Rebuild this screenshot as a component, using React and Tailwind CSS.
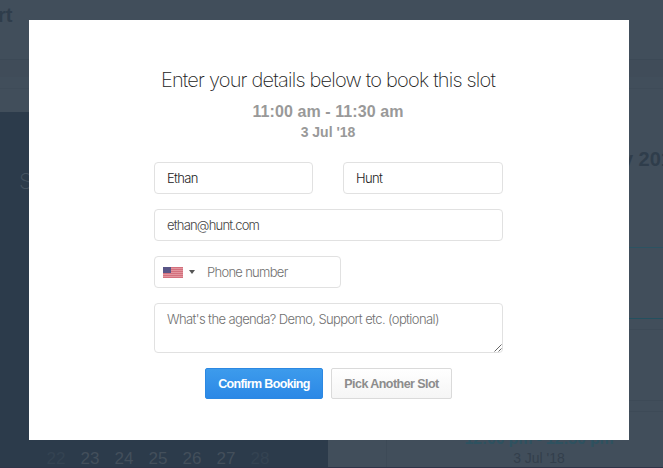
const days = [22, 23, 24, 25, 26, 27, 28];

function Backdrop() {
  return (
    <div className="flex h-full flex-col bg-[#414e5b] font-['Liberation_Sans',sans-serif]">
      <header className="h-[59px] shrink-0 pt-[3px] text-[20px] leading-[24px] font-bold text-[#2f3d4b]">
        <span className="-ml-[2px]">rt</span>
      </header>
      <div className="h-[18px] shrink-0 border-t border-[#3c4956] bg-[#404c59]" />
      <div className="h-[12px] shrink-0 border-b border-[#3e4b58]" />
      <div className="flex min-h-0 flex-1">
        <aside className="mt-[23px] flex w-[328px] shrink-0 flex-col justify-between bg-[#2c3b4b]">
          <div className="pt-[55px] pl-[19px] font-['Inter',sans-serif] text-[22px] leading-[28px] font-extralight text-[#455361]">
            Select
          </div>
          <div className="ml-[39px] grid h-[18px] w-[238px] grid-cols-7 text-center text-[17px] leading-[20px] text-[#434f5b]">
            {days.map((day) => (
              <span key={day} className={day === 22 || day === 28 ? "text-[#344352]" : ""}>
                {day}
              </span>
            ))}
          </div>
        </aside>
        <main className="flex min-w-0 flex-1 flex-col overflow-hidden">
          <div className="flex h-[159px] shrink-0 justify-end border-b border-[#2b5362] pt-[58px]">
            <div className="-mr-[9px] text-[20px] leading-[24px] font-bold whitespace-nowrap text-[#2f3d4b]">
              July 201
            </div>
          </div>
          <div className="h-[71px] shrink-0 border-b border-[#23505f]" />
          <div className="ml-[58px] h-[11px] shrink-0 border-b border-[#3d4a57]" />
          <div className="ml-[58px] h-[71px] shrink-0 border-b border-[#3d4a57]" />
          <div className="mt-[10px] ml-[58px] h-[56px] shrink-0 border-t border-l border-[#3d4a57] pt-[18px] text-center">
            <div className="ml-[28px] text-[16px] leading-[18px] font-bold tracking-[-0.2px] text-[#2e5260]">
              12:00 pm - 12:30 pm
            </div>
            <div className="ml-[28px] text-[14px] leading-[21px] text-[#333f4c]">3 Jul '18</div>
          </div>
        </main>
      </div>
      <div className="h-px shrink-0 bg-[#2f3448]" />
    </div>
  );
}

function Flag() {
  return (
    <svg width="20" height="11" viewBox="0 0 20 11" className="shrink-0">
      <rect width="20" height="11" fill="#e3959e" />
      {[0, 2, 4, 6, 8, 10].map((y) => (
        <rect key={y} y={y} width="20" height="1" fill="#d3707d" />
      ))}
      <rect width="8" height="6" fill="#595586" />
    </svg>
  );
}

const field =
  "rounded-[4px] border border-[#e1e1e1] bg-white px-[12px] text-[13px] font-light outline-none";

export default function App() {
  return (
    <div className="relative h-[468px] w-[663px] overflow-hidden">
      <Backdrop />
      <div className="absolute top-[20px] left-[29px] flex h-[420px] w-[600px] flex-col bg-white pt-[46px] font-['Inter',sans-serif]">
        <div className="pr-[2px] text-center text-[#999]">
          <h1 className="text-[20px] leading-[28px] font-extralight tracking-[-0.79px] text-[#222]">
            Enter your details below to book this slot
          </h1>
          <div className="mt-[8px] font-['Liberation_Sans',sans-serif] text-[16px] leading-[20px] font-bold tracking-[0.08px]">
            11:00 am - 11:30 am
          </div>
          <div className="mt-[1px] font-['Liberation_Sans',sans-serif] text-[14px] leading-[18px] font-bold">
            3 Jul '18
          </div>
        </div>
        <form className="mt-[21px] ml-[125px] flex w-[349px] flex-col gap-[15px]">
          <div className="flex justify-between">
            <input className={`${field} h-[32px] w-[159px] tracking-[-0.65px] text-[#222]`} defaultValue="Ethan" />
            <input className={`${field} h-[32px] w-[160px] tracking-[-0.65px] text-[#222]`} defaultValue="Hunt" />
          </div>
          <input className={`${field} h-[32px] w-full tracking-[-0.8px] text-[#444]`} defaultValue="ethan@hunt.com" />
          <div className="flex h-[32px] w-[187px] items-center rounded-[4px] border border-[#e1e1e1] pl-[8px]">
            <Flag />
            <svg width="6" height="4" viewBox="0 0 6 4" className="ml-[6px] shrink-0">
              <path d="M0 0h6L3 4z" fill="#555" />
            </svg>
            <input
              className="mt-[2px] ml-[12px] w-[120px] text-[13px] font-light tracking-[-0.7px] outline-none placeholder:text-[#707070]"
              placeholder="Phone number"
            />
          </div>
          <div className="relative h-[50px]">
            <textarea
              className={`${field} block h-[50px] w-full resize-none overflow-hidden pt-[5px] leading-[20px] tracking-[-0.61px] placeholder:text-[#707070]`}
              placeholder="What's the agenda? Demo, Support etc. (optional)"
            />
            <svg width="8" height="8" viewBox="0 0 8 8" className="absolute right-[1px] bottom-[1px]">
              <path d="M.5 7.5l7-7M4.5 7.5l3-3" stroke="#555" strokeWidth=".9" />
            </svg>
          </div>
          <div className="flex justify-center gap-[8px] font-['Liberation_Sans',sans-serif] text-[12.5px] font-bold">
            <button
              type="button"
              className="h-[31px] w-[118px] rounded-[2px] border border-[#2c88e2] bg-linear-to-b from-[#3d9bec] to-[#2b88e6] pt-[2px] tracking-[-0.65px] whitespace-nowrap text-white"
            >
              Confirm Booking
            </button>
            <button
              type="button"
              className="h-[31px] w-[121px] rounded-[2px] border border-[#dadada] bg-linear-to-b from-white to-[#f5f5f5] pt-[2px] tracking-[-0.55px] whitespace-nowrap text-[#8c8c8c]"
            >
              Pick Another Slot
            </button>
          </div>
        </form>
      </div>
    </div>
  );
}
